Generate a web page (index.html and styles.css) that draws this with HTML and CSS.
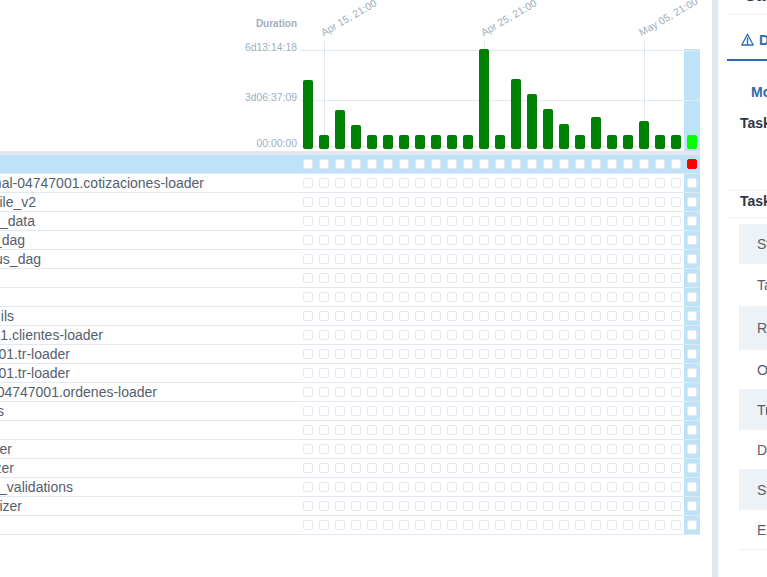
FILE: index.html
```html
<!DOCTYPE html>
<html lang="en">
<head>
    <meta charset="UTF-8">
    <title>Grid</title>
    <link rel="stylesheet" href="styles.css">
</head>
<body>
    <div class="page">
        <section class="grid-panel">
            <div class="chart">
                <div class="axis">
                    <span class="axis-title">Duration</span>
                    <span class="tick-max">6d13:14:18</span>
                    <span class="tick-mid">3d06:37:09</span>
                    <span class="tick-min">00:00:00</span>
                </div>
                <div class="plot">
                    <div class="selected-col"></div>
                    <div class="hline hline-top"></div>
                    <div class="hline hline-mid"></div>
                    <div class="hline hline-low"></div>
                    <div class="vline vline-1"></div>
                    <div class="vline vline-2"></div>
                    <div class="vline vline-3"></div>
                    <span class="date date-1">Apr 15, 21:00</span>
                    <span class="date date-2">Apr 25, 21:00</span>
                    <span class="date date-3">May 05, 21:00</span>
                    <div id="bars" class="bars"></div>
                </div>
            </div>
            <div id="rows"></div>
        </section>

        <div class="divider"></div>

        <aside class="details">
            <h2 class="run-title">Status</h2>
            <div class="tabs">
                <div class="tab">
                    <svg class="tab-icon" width="13" height="13" viewBox="0 0 13 13">
                        <path d="M6.5 1.2 12.2 12H.8Z" fill="none" stroke="#2b6cb0" stroke-width="1.3" stroke-linejoin="round"/>
                        <path d="M6.5 4.5V12" stroke="#2b6cb0" stroke-width="1.4"/>
                    </svg>
                    <span>Details</span>
                </div>
            </div>
            <a class="more-link">More Details</a>
            <h3 class="section-title">Task Instance</h3>
            <h3 class="table-title">Task Instance Details</h3>
            <div class="info-table">
                <div class="info-row">Status</div>
                <div class="info-row">Task Id</div>
                <div class="info-row">Run Id</div>
                <div class="info-row">Operator</div>
                <div class="info-row">Try Number</div>
                <div class="info-row">Duration</div>
                <div class="info-row">Started</div>
                <div class="info-row">Ended</div>
            </div>
        </aside>
    </div>

    <script src="script.js"></script>
</body>
</html>
```

FILE: styles.css
```css
* {
    margin: 0;
    padding: 0;
    box-sizing: border-box;
}

html, body {
    height: 100%;
    overflow: hidden;
}

body {
    font-family: 'Liberation Sans', Arial, sans-serif;
    font-size: 14px;
    color: #555e6e;
    background: white;
}

.page {
    display: flex;
    width: 767px;
    height: 577px;
    overflow: hidden;
}

/* Grille */
.grid-panel {
    flex: 0 0 700px;
    min-width: 0;
}

.chart {
    display: flex;
    height: 155px;
    border-bottom: 4px solid #e2e8f0;
}

.axis {
    display: flex;
    flex-direction: column;
    align-items: flex-end;
    flex: 0 0 300px;
    padding: 17px 3px 0 0;
    font-size: 10.4px;
    line-height: 14px;
    color: #a0aec0;
}

.axis-title {
    font-size: 10px;
    font-weight: bold;
}

.tick-max {
    margin-top: 10px;
}

.tick-mid {
    margin-top: 36px;
}

.tick-min {
    margin-top: 32px;
}

.plot {
    position: relative;
    flex: 0 0 400px;
}

.selected-col {
    position: absolute;
    top: 49px;
    right: 0;
    bottom: 0;
    width: 16px;
    background: #bee3f8;
}

.hline {
    position: absolute;
    left: 0;
    right: 0;
    height: 1px;
    background: #e2e8f0;
}

.hline-top { top: 50px; }
.hline-mid { top: 100px; }
.hline-low { top: 146px; }

.vline {
    position: absolute;
    top: 41px;
    bottom: 2px;
    width: 1px;
    background: #e2e8f0;
}

.vline-1 { left: 24px; }
.vline-2 { left: 184px; }
.vline-3 { left: 344px; }

.date {
    position: absolute;
    top: 27px;
    font-size: 10.4px;
    line-height: 12px;
    color: #a0aec0;
    white-space: nowrap;
    transform: rotate(-30deg);
    transform-origin: left bottom;
}

.date-1 { left: 25px; }
.date-2 { left: 185px; }
.date-3 { left: 343px; }

.bars {
    position: absolute;
    left: 0;
    bottom: 2px;
    display: flex;
    align-items: flex-end;
}

.bar-cell {
    display: flex;
    justify-content: center;
    width: 16px;
}

.bar {
    width: 10px;
    border-radius: 2px;
    background: #008000;
}

.bar.latest {
    background: #00ff00;
}

/* Lignes */
.row {
    display: flex;
    height: 19px;
    border-bottom: 1px solid #e2e8f0;
}

.row.head {
    background: #bee3f8;
}

.row-name {
    display: flex;
    justify-content: flex-end;
    align-items: center;
    flex: 0 0 300px;
    min-width: 0;
    white-space: nowrap;
}

.row-name span {
    flex-shrink: 0;
}

.cell {
    display: flex;
    justify-content: center;
    align-items: center;
    flex: 0 0 16px;
}

.cell.selected {
    background: #bee3f8;
}

.box {
    width: 10px;
    height: 10px;
    border: 1px solid #e2e8f0;
    border-radius: 2px;
    background: white;
}

.box.failed {
    border-color: #ff0000;
    background: #ff0000;
}

.divider {
    flex: 0 0 6px;
    margin-left: 12px;
    background: #e2e8f0;
}

/* Détails */
.details {
    flex: 0 0 auto;
    width: 300px;
    padding-left: 9px;
    white-space: nowrap;
}

.run-title {
    height: 27px;
    margin-top: -12px;
    padding-left: 18px;
    border-bottom: 1px solid #edf2f7;
    font-size: 16px;
    line-height: 15px;
    color: #2d3748;
}

.tabs {
    height: 46px;
    border-bottom: 2px solid #2b6cb0;
}

.tab {
    display: flex;
    align-items: center;
    gap: 5px;
    height: 49px;
    padding-left: 14px;
    font-weight: bold;
    color: #2b6cb0;
}

.tab-icon {
    flex-shrink: 0;
}

.more-link {
    display: block;
    margin-top: 24px;
    padding-left: 24px;
    font-size: 14px;
    font-weight: bold;
    line-height: 14px;
    color: #2b6cb0;
}

.section-title {
    margin-top: 16px;
    padding-left: 13px;
    font-size: 14px;
    line-height: 16px;
    color: #2d3748;
}

.table-title {
    margin-top: 59px;
    padding: 3px 0 9px 13px;
    border-top: 1px solid #edf2f7;
    border-bottom: 1px solid #edf2f7;
    font-size: 14px;
    line-height: 14px;
    color: #2d3748;
}

.info-table {
    margin: 6px 0 0 12px;
    border-bottom: 1px solid #edf2f7;
}

.info-row {
    display: flex;
    align-items: center;
    padding-left: 18px;
}

/* hauteurs : la colonne des valeurs passe à la ligne dans l'original */
.info-row:nth-child(odd) { background: #edf2f7; }
.info-row:nth-child(1) { height: 40px; }
.info-row:nth-child(2) { height: 42px; }
.info-row:nth-child(3) { height: 44px; }
.info-row:nth-child(4) { height: 39px; }
.info-row:nth-child(5) { height: 41px; }
.info-row:nth-child(6) { height: 39px; }
.info-row:nth-child(7) { height: 41px; }
.info-row:nth-child(8) { height: 39px; }
```

FILE: script.js
```js
// Hauteur des barres de durée (px)
const barHeights = [69, 14, 39, 24, 14, 14, 14, 14, 14, 14, 14, 100, 14, 70, 55, 40, 25, 14, 32, 14, 14, 28, 14, 14, 14];

// Nom de la tâche + abscisse de fin du texte (la vue est défilée vers la droite)
const tasks = [
    ['nal-04747001.cotizaciones-loader', 204],
    ['ile_v2', 36],
    ['t_data', 35],
    ['_dag', 25],
    ['us_dag', 41],
    ['', 0],
    ['', 0],
    ['ils', 14],
    ['1.clientes-loader', 103],
    ['01.tr-loader', 70],
    ['01.tr-loader', 70],
    ['04747001.ordenes-loader', 157],
    ['s', 4],
    ['', 0],
    ['er', 12],
    ['zer', 14],
    ['_validations', 73],
    ['izer', 22],
    ['', 0]
];

const NAME_COL = 300;
const barsEl = document.getElementById('bars');
const rowsEl = document.getElementById('rows');

barHeights.forEach((h, i) => {
    const cell = document.createElement('div');
    cell.className = 'bar-cell';
    const bar = document.createElement('div');
    bar.className = i === barHeights.length - 1 ? 'bar latest' : 'bar';
    bar.style.height = h + 'px';
    cell.appendChild(bar);
    barsEl.appendChild(cell);
});

function addRow(name, end, isHead) {
    const row = document.createElement('div');
    row.className = isHead ? 'row head' : 'row';

    const label = document.createElement('div');
    label.className = 'row-name';
    if (name) {
        const span = document.createElement('span');
        span.textContent = name;
        span.style.marginRight = (NAME_COL - end) + 'px';
        label.appendChild(span);
    }
    row.appendChild(label);

    for (let i = 0; i < barHeights.length; i++) {
        const last = i === barHeights.length - 1;
        const cell = document.createElement('div');
        cell.className = last ? 'cell selected' : 'cell';
        const box = document.createElement('div');
        box.className = last && isHead ? 'box failed' : 'box';
        cell.appendChild(box);
        row.appendChild(cell);
    }
    rowsEl.appendChild(row);
}

addRow('', 0, true);
tasks.forEach(t => addRow(t[0], t[1], false));
```
